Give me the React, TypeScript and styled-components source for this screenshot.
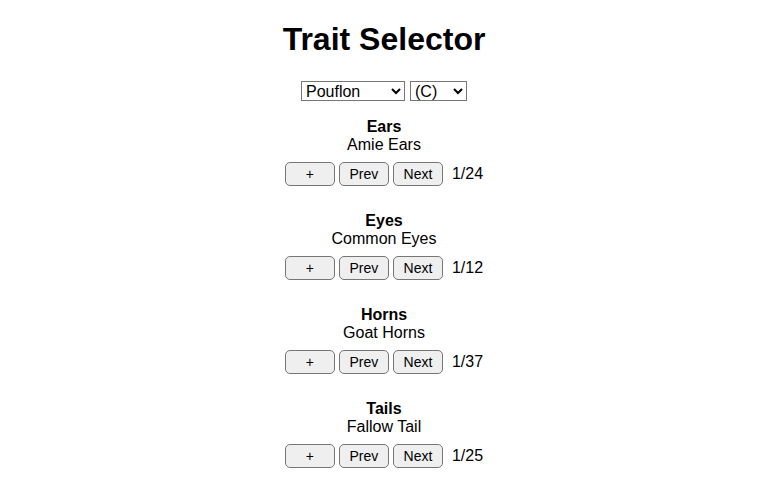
import React, { useState } from 'react';
import styled, { createGlobalStyle } from 'styled-components';

const GlobalStyle = createGlobalStyle`
  body {
    margin: 0;
    background: #ffffff;
    color: #000000;
    font-family: "Liberation Sans", Arial, sans-serif;
  }
`;

const Page = styled.div`
  display: flex;
  flex-direction: column;
  align-items: center;
  padding-top: 21px;
`;

const Title = styled.h1`
  margin: 0;
  font-size: 32px;
  font-weight: bold;
  line-height: 37px;
`;

const SelectRow = styled.div`
  display: flex;
  gap: 5px;
  margin-top: 23px;
`;

const Select = styled.select<{ $width: number }>`
  width: ${(p) => p.$width}px;
  height: 20px;
  font-family: "Liberation Sans", Arial, sans-serif;
  font-size: 16px;
  padding: 0;
  border: 1px solid #767676;
  border-radius: 0;
  background: #ffffff;
  color: #000;
`;

const TraitList = styled.div`
  display: flex;
  flex-direction: column;
  align-items: center;
  gap: 26px;
  margin-top: 17px;
`;

const Section = styled.div`
  display: flex;
  flex-direction: column;
  align-items: center;
`;

const Label = styled.div`
  font-size: 16px;
  font-weight: bold;
  line-height: 18px;
`;

const Value = styled.div`
  font-size: 16px;
  line-height: 18px;
`;

const Controls = styled.div`
  display: flex;
  align-items: center;
  gap: 4px;
  margin-top: 8px;
`;

const Button = styled.button`
  width: 50px;
  height: 24px;
  padding: 0;
  font-family: "Liberation Sans", Arial, sans-serif;
  font-size: 14px;
  color: #000;
  background: #efefef;
  border: 1px solid #767676;
  border-radius: 5px;
`;

const Counter = styled.span`
  font-size: 16px;
  margin-left: 5px;
`;

const traits = [
  { label: 'Ears', options: ['Amie Ears'], total: 24 },
  { label: 'Eyes', options: ['Common Eyes'], total: 12 },
  { label: 'Horns', options: ['Goat Horns'], total: 37 },
  { label: 'Tails', options: ['Fallow Tail'], total: 25 },
];

const TraitRow: React.FC<{ label: string; name: string; total: number }> = ({ label, name, total }) => {
  const [index, setIndex] = useState(1);
  return (
    <Section>
      <Label>{label}</Label>
      <Value>{name}</Value>
      <Controls>
        <Button>+</Button>
        <Button onClick={() => setIndex(index > 1 ? index - 1 : total)}>Prev</Button>
        <Button onClick={() => setIndex(index < total ? index + 1 : 1)}>Next</Button>
        <Counter>
          {index}/{total}
        </Counter>
      </Controls>
    </Section>
  );
};

const App: React.FC = () => {
  return (
    <Page>
      <GlobalStyle />
      <Title>Trait Selector</Title>
      <SelectRow>
        <Select $width={104} defaultValue="Pouflon">
          <option>Pouflon</option>
        </Select>
        <Select $width={57} defaultValue="(C)">
          <option>(C)</option>
        </Select>
      </SelectRow>
      <TraitList>
        {traits.map((t) => (
          <TraitRow key={t.label} label={t.label} name={t.options[0]} total={t.total} />
        ))}
      </TraitList>
    </Page>
  );
};

export default App;
